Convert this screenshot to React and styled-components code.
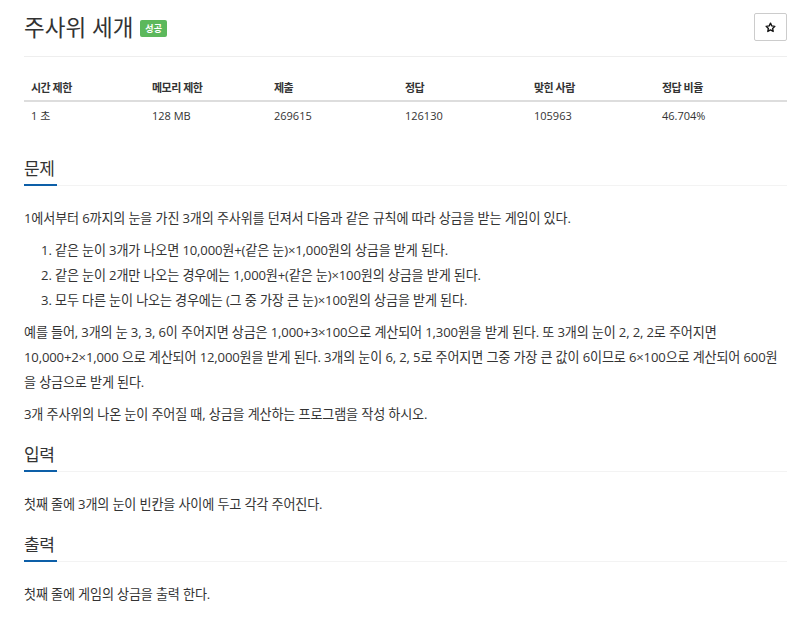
import React from "react";
import styled, { createGlobalStyle } from "styled-components";

const GlobalStyle = createGlobalStyle`
  body {
    margin: 0;
    background: #fff;
    color: #333;
    font-family: "Open Sans", "Noto Sans CJK KR", sans-serif;
  }
`;

// column widths (content box) taken from the reference
const stats = [
  ["시간 제한", "1 초", 107],
  ["메모리 제한", "128 MB", 108],
  ["제출", "269615", 117],
  ["정답", "126130", 115],
  ["맞힌 사람", "105963", 114],
  ["정답 비율", "46.704%", null],
];

function StarIcon() {
  return (
    <svg width="11" height="11" viewBox="0 0 24 24" fill="none" stroke="#111" strokeWidth="3" strokeLinejoin="round">
      <path d="M12 2.5l2.9 6.1 6.6.8-4.9 4.6 1.3 6.6L12 17.3l-5.9 3.3 1.3-6.6-4.9-4.6 6.6-.8z" />
    </svg>
  );
}

export default function App() {
  return (
    <Page>
      <GlobalStyle />
      <TitleBar>
        <Title>
          주사위 세개 <Badge>성공</Badge>
        </Title>
        <StarButton>
          <StarIcon />
        </StarButton>
      </TitleBar>

      <Table>
        <thead>
          <tr>
            {stats.map(([h, , w]) => (
              <Th key={h} $w={w}>
                {h}
              </Th>
            ))}
          </tr>
        </thead>
        <tbody>
          <tr>
            {stats.map(([h, v]) => (
              <Td key={h}>{v}</Td>
            ))}
          </tr>
        </tbody>
      </Table>

      <Section $first>
        <Headline>
          <span>문제</span>
        </Headline>
        <P>
          1에서부터 6까지의 눈을 가진 3개의 주사위를 던져서 다음과 같은 규칙에 따라 상금을 받는 게임이 있다.
        </P>
        <List>
          <li>같은 눈이 3개가 나오면 10,000원+(같은 눈)×1,000원의 상금을 받게 된다.</li>
          <li>같은 눈이 2개만 나오는 경우에는 1,000원+(같은 눈)×100원의 상금을 받게 된다.</li>
          <li>모두 다른 눈이 나오는 경우에는 (그 중 가장 큰 눈)×100원의 상금을 받게 된다.</li>
        </List>
        <P>
          예를 들어, 3개의 눈 3, 3, 6이 주어지면 상금은 1,000+3×100으로 계산되어 1,300원을 받게 된다. 또 3개의 눈이 2, 2, 2로 주어지면 10,000+2×1,000 으로 계산되어 12,000원을 받게 된다. 3개의 눈이 6, 2, 5로 주어지면 그중 가장 큰 값이 6이므로 6×100으로 계산되어 600원을 상금으로 받게 된다.
        </P>
        <P>3개 주사위의 나온 눈이 주어질 때, 상금을 계산하는 프로그램을 작성 하시오.</P>
      </Section>

      <Section>
        <Headline>
          <span>입력</span>
        </Headline>
        <P>첫째 줄에 3개의 눈이 빈칸을 사이에 두고 각각 주어진다.</P>
      </Section>

      <Section>
        <Headline>
          <span>출력</span>
        </Headline>
        <P>첫째 줄에 게임의 상금을 출력 한다.</P>
      </Section>
    </Page>
  );
}

const Page = styled.div`
  padding: 0 13px 0 24px;
`;

const TitleBar = styled.div`
  display: flex;
  justify-content: space-between;
  align-items: center;
  padding: 12px 0 12px;
  border-bottom: 1px solid #eee;
`;

const Title = styled.h1`
  margin: 0;
  font-size: 22.5px;
  font-weight: 400;
  line-height: 32px;
  color: #333;
  display: flex;
  align-items: center;
`;

const Badge = styled.span`
  margin-left: 7px;
  display: inline-block;
  background: #5cb85c;
  color: #fff;
  font-size: 9px;
  font-weight: 700;
  line-height: 17px;
  padding: 0 5px;
  border-radius: 2px;
`;

const StarButton = styled.button`
  width: 33px;
  height: 28px;
  display: flex;
  align-items: center;
  justify-content: center;
  background: #fff;
  border: 1px solid #ccc;
  border-radius: 2px;
  padding: 0;
  margin-top: 1px;
  margin-bottom: 3px;
`;

const Table = styled.table`
  width: 100%;
  margin-top: 16px;
  border-collapse: collapse;
  table-layout: fixed;
  font-size: 11px;
`;

const Th = styled.th`
  text-align: left;
  font-weight: 700;
  letter-spacing: -0.5px;
  padding: 0 7px;
  height: 27px;
  width: ${(p) => (p.$w ? `${p.$w}px` : "auto")};
  border-bottom: 2px solid #ddd;
  color: #333;
`;

const Td = styled.td`
  padding: 0 7px;
  height: 26px;
  font-size: 11px;
  color: #333;
`;

const Section = styled.section`
  margin-top: ${(p) => (p.$first ? "29px" : "16px")};
`;

const Headline = styled.h2`
  margin: 0 0 20px;
  font-size: 17px;
  font-weight: 400;
  line-height: 24px;
  letter-spacing: -0.5px;
  border-bottom: 1px solid #f3f3f3;
  color: #333;

  span {
    display: inline-block;
    padding-bottom: 3px;
    border-bottom: 2px solid #0d5fa8;
    margin-bottom: -1px;
    width: 33px;
  }
`;

const P = styled.p`
  margin: 0 0 7px;
  padding-right: 4px;
  font-size: 13.1px;
  line-height: 25px;
  letter-spacing: -0.15px;
`;

const List = styled.ol`
  margin: 0 0 7px;
  padding-left: 31px;
  font-size: 13.1px;
  line-height: 25px;
  letter-spacing: -0.15px;
`;
